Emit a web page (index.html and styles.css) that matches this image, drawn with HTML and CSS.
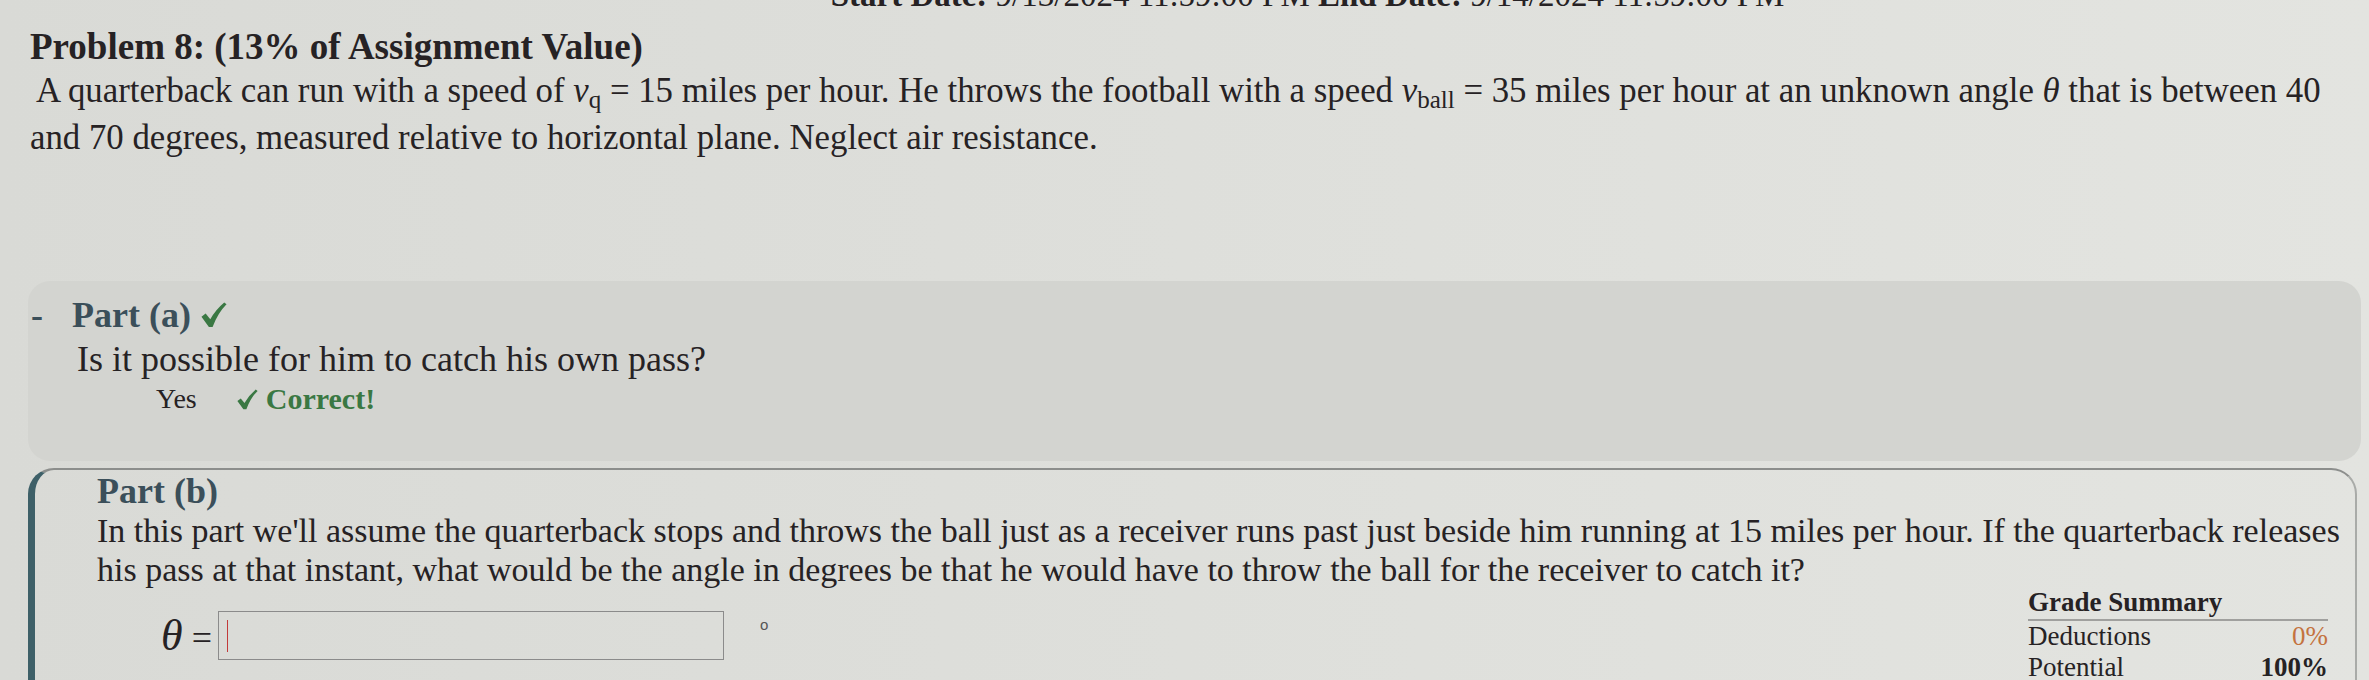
FILE: index.html
```html
<!DOCTYPE html>
<html lang="en">
<head>
<meta charset="utf-8">
<title>Problem 8</title>
<link rel="stylesheet" href="styles.css">
</head>
<body>
<div class="dates"><b>Start Date:</b> 9/13/2024 11:59:00 PM <b>End Date:</b> 9/14/2024 11:59:00 PM</div>

<section class="problem">
  <h1 class="title">Problem 8: (13% of Assignment Value)</h1>
  <p class="statement">A quarterback can run with a speed of <span class="math"><i>v</i><sub>q</sub> = 15</span> miles per hour. He throws the football with a speed <span class="math"><i>v</i><sub>ball</sub> = 35</span> miles per hour at an unknown angle <i class="math">θ</i> that is between 40 and 70 degrees, measured relative to horizontal plane. Neglect air resistance.</p>
</section>

<section class="part part-done">
  <div class="part-head"><span class="toggle">-</span><span class="part-name">Part (a)</span><svg class="check" viewBox="0 0 28 28" width="26" height="26" aria-hidden="true"><path d="M0.5 16 L5 12.5 L10 18.5 Q16 8 25 0.5 L27.5 2.5 Q18 12 12.5 27 L8.5 27 Z"/></svg></div>
  <p class="question">Is it possible for him to catch his own pass?</p>
  <div class="answer"><span class="yes">Yes</span><span class="correct"><svg class="ck" viewBox="0 0 28 28" width="21" height="21" aria-hidden="true"><path d="M0.5 16 L5 12.5 L10 18.5 Q16 8 25 0.5 L27.5 2.5 Q18 12 12.5 27 L8.5 27 Z"/></svg> Correct!</span></div>
</section>

<section class="part part-active">
  <div class="part-head"><span class="part-name">Part (b)</span></div>
  <p class="question">In this part we'll assume the quarterback stops and throws the ball just as a receiver runs past just beside him running at 15 miles per hour. If the quarterback releases his pass at that instant, what would be the angle in degrees be that he would have to throw the ball for the receiver to catch it?</p>
  <div class="answer-row">
    <div class="entry">
      <span class="var"><i class="theta">θ</i> =</span>
      <span class="input"><span class="caret"></span></span>
      <span class="deg">o</span>
    </div>
    <table class="grade">
      <tr><th colspan="2">Grade Summary</th></tr>
      <tr><td>Deductions</td><td class="num ded">0%</td></tr>
      <tr><td>Potential</td><td class="num pot">100%</td></tr>
    </table>
  </div>
</section>
</body>
</html>
```

FILE: styles.css
```css
html, body {
  margin: 0;
  padding: 0;
}
body {
  background: linear-gradient(90deg, #d9dad6 0%, #dedfdb 50%, #e3e4e0 100%);
  color: #262224;
  font-family: "Liberation Serif", "Times New Roman", serif;
  font-size: 36px;
  height: 680px;
  overflow: hidden;
}
.dates {
  text-align: center;
  font-size: 33px;
  line-height: 38px;
  margin-top: -24px;
  padding-left: 246px;
  white-space: nowrap;
}
.problem {
  padding: 0 20px 0 30px;
}
.title {
  font-size: 37px;
  font-weight: bold;
  margin: 12px 0 0 0;
  line-height: 41px;
}
.statement {
  margin: 0;
  font-size: 34.8px;
  line-height: 47px;
  text-indent: 6px;
}
.math i, i.math {
  font-style: italic;
}
sub {
  font-size: 0.72em;
  vertical-align: -0.25em;
  line-height: 0;
}
.part {
  margin-left: 28px;
}
.part-done {
  margin-top: 120px;
  margin-right: 8px;
  background: #d3d4d0;
  border-radius: 22px;
  height: 180px;
  box-sizing: border-box;
  padding-top: 14px;
}
.part-head {
  display: flex;
  align-items: baseline;
  font-weight: bold;
  color: #3b4f5a;
  line-height: 40px;
}
.toggle {
  width: 41px;
  padding-left: 3px;
  color: #3b4f5a;
}
.part-name {
  font-size: 36px;
}
.check {
  fill: #3a7843;
  margin-left: 10px;
  align-self: center;
}
.part-done .question {
  margin: 4px 0 0 49px;
  line-height: 40px;
}
.answer {
  margin-left: 128px;
  margin-top: 2px;
  font-size: 28px;
  line-height: 36px;
  display: flex;
  align-items: center;
  gap: 40px;
}
.correct {
  color: #3a7843;
  font-weight: bold;
  font-size: 30px;
  display: flex;
  align-items: center;
}
.ck {
  fill: #3a7843;
  margin-right: 8px;
}
.part-active {
  margin-top: 7px;
  margin-right: 12px;
  border-top: 2px solid #8c8e8c;
  border-left: 7px solid #3e6068;
  border-right: 2px solid #a9aba8;
  border-radius: 26px 26px 0 0;
  padding: 1px 4px 0 62px;
  height: 240px;
}
.part-active .question {
  margin: 0;
  font-size: 34px;
  line-height: 39px;
}
.answer-row {
  display: flex;
  justify-content: space-between;
  align-items: flex-start;
  margin-top: -2px;
}
.entry {
  display: flex;
  align-items: center;
  margin-top: 23px;
  margin-left: 64px;
}
.var {
  font-size: 36px;
  margin-right: 6px;
}
.theta {
  font-size: 44px;
}
.input {
  width: 506px;
  height: 49px;
  border: 1.5px solid #8b8b8b;
  box-sizing: border-box;
  display: flex;
  align-items: center;
  padding-left: 8px;
}
.caret {
  width: 1.5px;
  height: 32px;
  background: #c23a3a;
}
.deg {
  font-family: "Liberation Sans", Arial, sans-serif;
  font-size: 15px;
  color: #555;
  margin-left: 36px;
  align-self: flex-start;
  margin-top: 6px;
}
.grade {
  border-collapse: collapse;
  font-size: 27px;
  width: 300px;
  margin-right: 23px;
}
.grade th {
  text-align: left;
  font-weight: bold;
  border-bottom: 2px solid #a0a09e;
  padding: 0 0 2px 0;
  line-height: 30px;
}
.grade td {
  padding: 0;
  line-height: 31px;
}
.grade .num {
  text-align: right;
}
.ded {
  color: #c4733f;
}
.pot {
  font-weight: bold;
}
```
